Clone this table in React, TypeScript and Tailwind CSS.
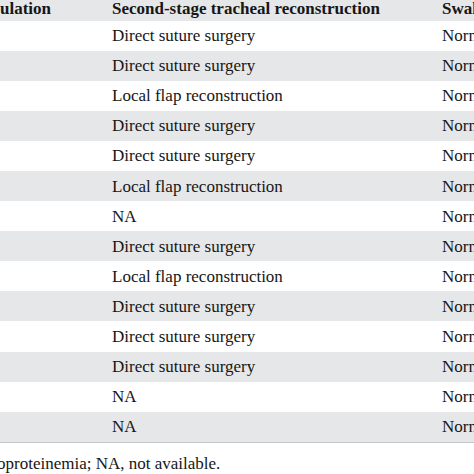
import React from "react";

const rows = [
  "Direct suture surgery",
  "Direct suture surgery",
  "Local flap reconstruction",
  "Direct suture surgery",
  "Direct suture surgery",
  "Local flap reconstruction",
  "NA",
  "Direct suture surgery",
  "Local flap reconstruction",
  "Direct suture surgery",
  "Direct suture surgery",
  "Direct suture surgery",
  "NA",
  "NA",
];

export default function App() {
  return (
    <div className="w-[474px] h-[474px] overflow-hidden bg-white text-[#161616] font-['Liberation_Serif']">
      <div className="flex h-[20.5px] bg-[#e6e7e9] text-[17px] font-bold leading-[17px] whitespace-nowrap items-start">
        <div className="w-[112px] shrink-0">ulation</div>
        <div className="w-[330px] shrink-0">Second-stage tracheal reconstruction</div>
        <div className="shrink-0">Swallowing</div>
      </div>
      {rows.map((r, i) => (
        <div
          key={i}
          className={
            "flex h-[30.1px] items-center text-[17px] leading-[17px] whitespace-nowrap " +
            (i % 2 === 1 ? "bg-[#e6e7e9]" : "bg-white")
          }
        >
          <div className="w-[112px] shrink-0"></div>
          <div className="w-[330px] shrink-0">{r}</div>
          <div className="shrink-0">Normal</div>
        </div>
      ))}
      <div className="h-[1px] bg-[#c4c5c8]"></div>
      <div className="pt-[12px] text-[17px] leading-[17px] whitespace-nowrap -ml-[3px]">
        oproteinemia; NA, not available.
      </div>
    </div>
  );
}
